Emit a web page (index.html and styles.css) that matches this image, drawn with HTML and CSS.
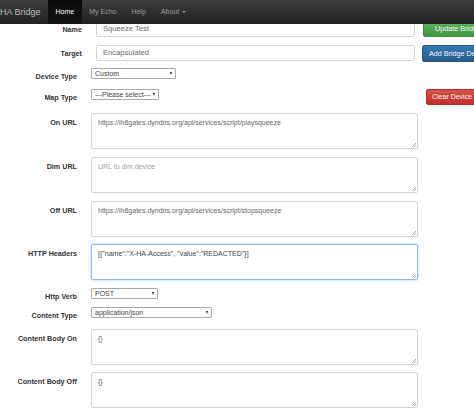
FILE: index.html
```
<!DOCTYPE html>
<html lang="en">
<head>
<meta charset="utf-8">
<title>HA Bridge</title>
<link rel="stylesheet" href="styles.css">
</head>
<body>
<nav class="navbar">
  <span class="brand">HA Bridge</span>
  <ul class="nav">
    <li class="active">Home</li>
    <li>My Echo</li>
    <li>Help</li>
    <li>About <span class="caret"></span></li>
  </ul>
</nav>
<main class="page">
  <form class="form">
    <div class="row row-top h16 mt21"><label>Name</label><div class="input">Squeeze Test</div></div>
    <div class="row row-top h16"><label>Target</label><div class="input">Encapsulated</div></div>
    <div class="row h11 mt7"><label class="lbl-s">Device Type</label><div class="select w85">Custom<span class="arrow"></span></div></div>
    <div class="row h11 mt10"><label class="lbl-s">Map Type</label><div class="select w68">---Please select---<span class="arrow"></span></div></div>
    <div class="row h36 mt13"><label>On URL</label><div class="textarea">https://ih8gates.dyndns.org/api/services/script/playsqueeze</div></div>
    <div class="row h36"><label>Dim URL</label><div class="textarea placeholder">URL to dim device</div></div>
    <div class="row h36"><label>Off URL</label><div class="textarea">https://ih8gates.dyndns.org/api/services/script/stopsqueeze</div></div>
    <div class="row h36 mt7"><label>HTTP Headers</label><div class="textarea focus">[{"name":"X-HA-Access", "value":"REDACTED"}]</div></div>
    <div class="row h11"><label class="lbl-s">Http Verb</label><div class="select w67">POST<span class="arrow"></span></div></div>
    <div class="row h11"><label class="lbl-s">Content Type</label><div class="select w121">application/json<span class="arrow"></span></div></div>
    <div class="row h36 mt11"><label>Content Body On</label><div class="textarea">{}</div></div>
    <div class="row h36 mt7"><label>Content Body Off</label><div class="textarea">{}</div></div>
  </form>
  <aside class="actions">
    <button class="btn btn-success" type="button">Update Bridge Device</button>
    <button class="btn btn-primary" type="button">Add Bridge Device</button>
    <button class="btn btn-danger" type="button">Clear Device</button>
  </aside>
</main>
</body>
</html>
```
FILE: styles.css
```
html, body {
  margin: 0;
  padding: 0;
  background: #fff;
  overflow: hidden;
  width: 474px;
  height: 416px;
}
body {
  font-family: "Liberation Sans", Arial, sans-serif;
  color: #333;
}
.navbar {
  position: fixed;
  top: 0;
  left: 0;
  right: 0;
  height: 24px;
  display: flex;
  align-items: stretch;
  background: linear-gradient(to bottom, #3c3c3c 0, #222 100%);
  z-index: 10;
}
.brand {
  width: 48px;
  font-size: 9px;
  line-height: 24px;
  color: #bdbdbd;
  white-space: nowrap;
}
.nav {
  list-style: none;
  margin: 0;
  padding: 0;
  display: flex;
}
.nav li {
  font-size: 7px;
  line-height: 24px;
  color: #9d9d9d;
  padding: 0 7.5px;
  white-space: nowrap;
}
.nav li.active {
  color: #fff;
  background: linear-gradient(to bottom, #080808 0, #141414 100%);
}
.caret {
  display: inline-block;
  width: 0;
  height: 0;
  margin-left: 1px;
  vertical-align: middle;
  border-top: 2.5px solid #9d9d9d;
  border-left: 2px solid transparent;
  border-right: 2px solid transparent;
}
.page {
  display: flex;
  align-items: flex-start;
  gap: 4px;
}
.form {
  width: 418px;
  flex: none;
  display: flex;
  flex-direction: column;
}
.row {
  display: grid;
  grid-template-columns: 77px 1fr;
  column-gap: 14px;
  align-items: start;
  margin-top: 8px;
}
.row-top {
  padding-left: 5px;
}
.h11 { height: 11px; }
.h16 { height: 16px; }
.h36 { height: 36px; }
.mt7 { margin-top: 7px; }
.mt10 { margin-top: 10px; }
.mt11 { margin-top: 11px; }
.mt13 { margin-top: 13px; }
.mt21 { margin-top: 21px; }
label {
  text-align: right;
  font-weight: bold;
  font-size: 7.2px;
  line-height: 9px;
  padding-top: 4.5px;
  white-space: nowrap;
  color: #333;
}
.row-top label, label.lbl-s {
  padding-top: 3.5px;
}
.input {
  width: 319px;
  height: 16px;
  box-sizing: border-box;
  border: 1px solid #d4d4d4;
  border-radius: 2px;
  font-size: 7.6px;
  line-height: 14px;
  padding: 0 6px;
  color: #6a6a6a;
}
.select {
  height: 11px;
  box-sizing: border-box;
  border: 1px solid #a9a9a9;
  border-radius: 1px;
  font-size: 7px;
  line-height: 9px;
  padding: 0 3px;
  color: #444;
  display: flex;
  justify-content: space-between;
  align-items: center;
  white-space: nowrap;
}
.w85 { width: 85px; }
.w68 { width: 68px; }
.w67 { width: 67px; }
.w121 { width: 121px; }
.arrow {
  width: 0;
  height: 0;
  border-top: 3px solid #222;
  border-left: 1.5px solid transparent;
  border-right: 1.5px solid transparent;
}
.textarea {
  position: relative;
  width: 327px;
  height: 36px;
  box-sizing: border-box;
  border: 1px solid #d4d4d4;
  border-radius: 2px;
  font-size: 7px;
  line-height: 8px;
  padding: 5px 6px 0;
  color: #666;
  white-space: nowrap;
  overflow: hidden;
}
.textarea::after {
  content: "";
  position: absolute;
  right: 1px;
  bottom: 1px;
  width: 4px;
  height: 4px;
  background: linear-gradient(135deg, transparent 40%, #aaa 40%, #aaa 55%, transparent 55%, transparent 70%, #aaa 70%, #aaa 85%, transparent 85%);
}
.textarea.placeholder {
  color: #a0a0a0;
}
.textarea.focus {
  border-color: #8fbde6;
  box-shadow: 0 0 3px rgba(102, 175, 233, 0.6);
  color: #444;
}
.actions {
  display: flex;
  flex-direction: column;
  align-items: flex-start;
}
.btn {
  font-family: "Liberation Sans", Arial, sans-serif;
  font-size: 7.2px;
  line-height: 14px;
  color: #fff;
  border: 1px solid transparent;
  border-radius: 2px;
  padding: 0 6px;
  white-space: nowrap;
  margin: 0;
  height: 16px;
  text-shadow: 0 -1px 0 rgba(0,0,0,.2);
}
.btn-success {
  margin-top: 21px;
  margin-left: 1px;
  padding-left: 11px;
  background: linear-gradient(to bottom, #5cb85c 0, #419641 100%);
  border-color: #3e8f3e;
}
.btn-primary {
  margin-top: 8px;
  padding-left: 6px;
  height: 17px;
  background: linear-gradient(to bottom, #337ab7 0, #265a88 100%);
  border-color: #245580;
}
.btn-danger {
  margin-top: 27px;
  margin-left: 4px;
  font-size: 7px;
  padding: 0 3px 0 5px;
  background: linear-gradient(to bottom, #d9534f 0, #c12e2a 100%);
  border-color: #b92c28;
}
```
